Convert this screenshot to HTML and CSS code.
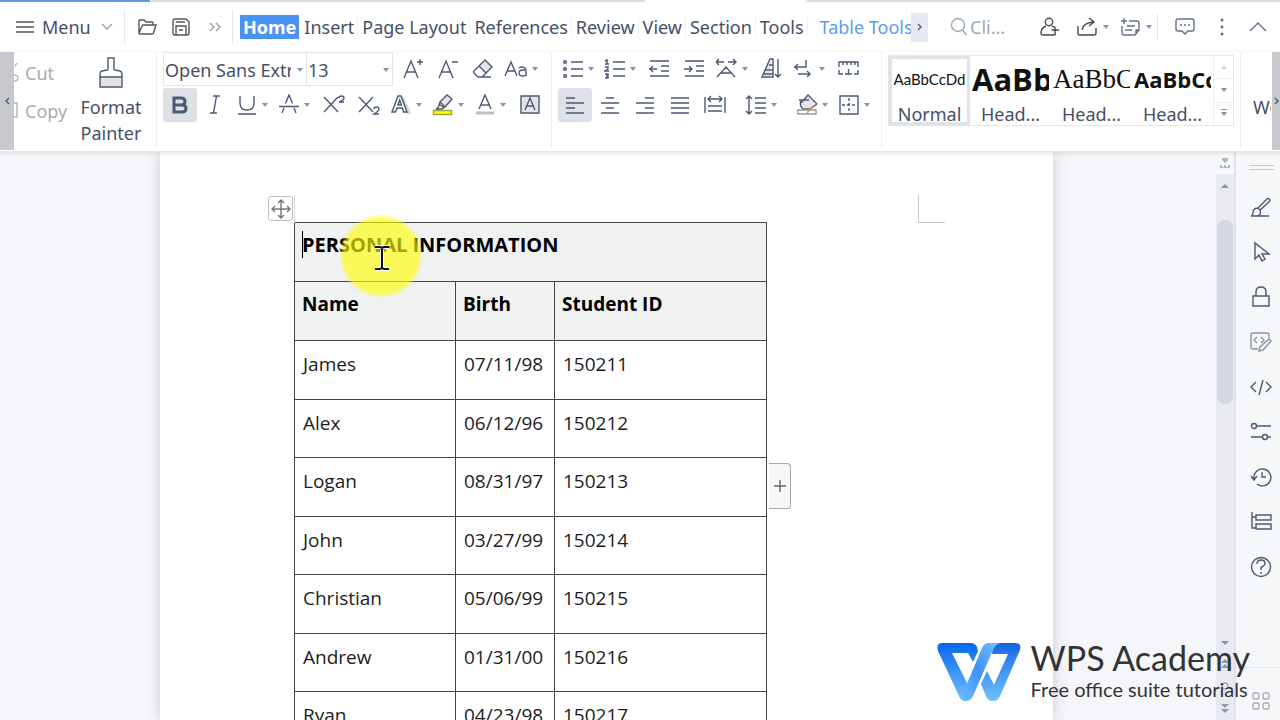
FILE: index.html
```html
<!DOCTYPE html>
<html lang="en">
<head>
<meta charset="utf-8">
<title>Personal Information - Writer</title>
<link rel="stylesheet" href="styles.css">
</head>
<body>
<div class="doc-tabs"><span class="doc-tab current"></span><span class="doc-tab wide"></span><span class="doc-tab open"></span><span class="doc-tab rest"></span></div>

<header class="menubar">
  <button class="menu-btn">
    <svg width="18" height="14" viewBox="0 0 18 14"><path d="M0 2h18M0 7h18M0 12h18"/></svg>
    <span>Menu</span>
    <svg class="pale" width="12" height="8" viewBox="0 0 12 8"><path d="M1 1l5 5 5-5"/></svg>
  </button>
  <div class="quick">
    <button aria-label="Open"><svg width="20" height="18" viewBox="0 0 20 18"><path d="M2 15V3q0-1 1-1h4l2 2h6q1 0 1 1v2M2 15l3-7q.4-1 1.200-1H19l-2.500 8q-.3 1-1.500 1H3q-1 0-1-1z"/></svg></button>
    <button aria-label="Save"><svg width="20" height="18" viewBox="0 0 20 18"><path d="M2 3q0-2 2-2h11l3 3v11q0 2-2 2H4q-2 0-2-2zM5 17V8h10v9M5 4h9M8 12h4"/></svg></button>
    <button aria-label="More quick actions"><svg class="pale" width="12" height="10" viewBox="0 0 12 10"><path d="M1 1l4 4-4 4M7 1l4 4-4 4"/></svg></button>
  </div>
  <nav class="tabs">
    <a class="tab active" href="#home">Home</a><a class="tab" href="#insert">Insert</a><a class="tab" href="#layout">Page Layout</a><a class="tab" href="#references">References</a><a class="tab" href="#review">Review</a><a class="tab" href="#view">View</a><a class="tab" href="#section">Section</a><a class="tab" href="#tools">Tools</a><a class="tab context" href="#table">Table Tools</a>
  </nav>
  <button class="tab-next" aria-label="More tabs"><svg width="6" height="8" viewBox="0 0 6 8"><path d="M1 1l3 3-3 3"/></svg></button>
  <label class="search">
    <svg width="18" height="20" viewBox="0 0 18 20"><circle cx="8" cy="8" r="6.500"/><path d="M12.500 13l4 5"/></svg>
    <input type="text" placeholder="Cli..." aria-label="Search commands">
  </label>
  <div class="actions">
    <button class="collab dark" aria-label="Collaborate"><svg width="20" height="20" viewBox="0 0 20 20"><circle cx="10" cy="5" r="3.700"/><path d="M12 18H4q-2 0-2-2 0-5 5-7M13 9l2 1M16 9.500v7M12.500 13H20M12 18h3q1.500 0 1.500-1.500"/></svg></button>
    <button class="drop dark" aria-label="Share"><svg width="20" height="20" viewBox="0 0 20 20"><path d="M1 9v7q0 2 2 2h14q2 0 2-2v-5M5 13q1-7 11-8M12 1l5 4-5 4"/></svg><i class="caret"></i></button>
    <button class="drop" aria-label="Add note"><svg width="20" height="20" viewBox="0 0 20 20"><path d="M1 4h6M4 1v6M9 4h8q2 0 2 2v7l-4 5H4q-2 0-2-2V9M7 9h8M5 13h7M19 13h-3v4"/></svg><i class="caret"></i></button>
    <button class="comment" aria-label="Comments"><svg width="20" height="18" viewBox="0 0 20 18"><path d="M3 1h14q2 0 2 2v8q0 2-2 2h-4l-3 3-3-3H3q-2 0-2-2V3q0-2 2-2zM5 7h2M9 7h2M13 7h2"/></svg></button>
    <button aria-label="More"><svg width="4" height="18" viewBox="0 0 4 18"><g class="solid"><circle cx="2" cy="2" r="1.500"/><circle cx="2" cy="9" r="1.500"/><circle cx="2" cy="16" r="1.500"/></g></svg></button>
    <button aria-label="Collapse ribbon"><svg width="18" height="10" viewBox="0 0 18 10"><path d="M1 9l8-8 8 8"/></svg></button>
  </div>
</header>

<section class="ribbon" aria-label="Home ribbon">
  <button class="scroller" aria-label="Scroll ribbon left"><svg width="5" height="8" viewBox="0 0 5 8"><path d="M4 1L1 4l3 3"/></svg></button>
  <div class="group clipboard">
    <div class="clip-list">
      <button disabled><svg width="8" height="20" viewBox="0 0 8 20"><path d="M1 3l2-3M0 12q4 0 4 3t-4 3"/></svg>Cut</button>
      <button disabled><svg width="8" height="20" viewBox="0 0 8 20"><path d="M0 2h3v14H0"/></svg>Copy</button>
    </div>
    <button class="painter"><svg width="24" height="32" viewBox="0 0 24 32"><path fill="#e2e3e5" stroke="none" d="M1 20h22v10H1z"/><path d="M9 1h6v11q0 1 1 1l5 1q2 .5 2 3v13H1V17q0-2.500 2-3l5-1q1 0 1-1zM1 20h22"/></svg><span>Format<br>Painter</span></button>
  </div>

  <div class="group font">
    <div class="row">
      <div class="combo family"><select aria-label="Font"><option>Open Sans ExtraBold</option></select><i class="caret"></i></div>
      <div class="combo size"><select aria-label="Font size"><option>13</option></select><i class="caret"></i></div>
      <button class="tool" aria-label="Grow font"><svg width="22" height="22" viewBox="0 0 22 22"><path d="M2 20L9 3l7 17M4.500 14h9M15 4h6M18 1v6"/></svg></button>
      <button class="tool" aria-label="Shrink font"><svg width="22" height="22" viewBox="0 0 22 22"><path d="M2 20L9 3l7 17M4.500 14h9M15 4h6"/></svg></button>
      <button class="tool" aria-label="Clear format"><svg width="22" height="22" viewBox="0 0 22 22"><path class="tint" d="M7 8l6-6 7 7-6 6z"/><path d="M2 13L13 2l7 7-10 10H6l-4-4q-1-1 0-2zM7 8l7 7M6 19h13"/></svg></button>
      <button class="tool drop" aria-label="Change case"><svg width="24" height="22" viewBox="0 0 24 22"><path d="M1 18L7 4l6 14M3 13h8M15 10q3-2 6 0 1 1 1 3v5M22 12h-3q-4 0-4 3t4 3 3-3"/></svg><i class="caret"></i></button>
    </div>
    <div class="row">
      <button class="tool on" aria-label="Bold"><svg width="22" height="22" viewBox="0 0 22 22"><path class="heavy" d="M5 4h7q4 0 4 3.500T12 11H5zM5 11h8q4 0 4 3.500T13 18H5z"/></svg></button>
      <button class="tool" aria-label="Italic"><svg width="22" height="22" viewBox="0 0 22 22"><path d="M9 2h7M6 19h7M12.500 2l-3 17"/></svg></button>
      <button class="tool drop" aria-label="Underline"><svg width="22" height="22" viewBox="0 0 22 22"><path d="M4 2v7q0 7 7 7t7-7V2M2 20h18"/></svg><i class="caret"></i></button>
      <button class="tool drop" aria-label="Strikethrough"><svg width="22" height="22" viewBox="0 0 22 22"><path d="M7.500 9.500L11 1l3.500 8.500M6 14l-2 5M16 14l2 5M1 12.500h20"/></svg><i class="caret"></i></button>
      <button class="tool" aria-label="Superscript"><svg width="22" height="22" viewBox="0 0 22 22"><path d="M1 3l14 15M15 3L1 18M16 4q0-2 2.500-2T21 4q0 2-5 4h5"/></svg></button>
      <button class="tool" aria-label="Subscript"><svg width="22" height="22" viewBox="0 0 22 22"><path d="M1 3l14 15M15 3L1 18M16 15q0-2 2.500-2t2.500 2q0 2-5 5h5"/></svg></button>
      <button class="tool drop" aria-label="Text effects"><svg width="22" height="22" viewBox="0 0 22 22"><path class="shade" d="M12 3l7 15-3 1"/><path d="M2 18L8 2h3l6 16h-3.500l-1-4H7l-1.500 4zM8 11h3.500L9.700 6z"/></svg><i class="caret"></i></button>
      <button class="tool drop" aria-label="Highlight"><svg width="22" height="22" viewBox="0 0 22 22"><path fill="#ffff00" stroke="#a3a344" d="M1.500 16.500h18v4h-18z"/><path class="tint" d="M8 9l8-8 4 4-8 8z"/><path d="M8 8l7-7 5 4-7 8zM8 8l-2 6-2 1h6l3-2M7 10l5 4"/></svg><i class="caret"></i></button>
      <button class="tool drop" aria-label="Font color"><svg width="22" height="22" viewBox="0 0 22 22"><path d="M5 15L11 1l6 14M7 11h8"/><path class="gray-bar" d="M2 19h18"/></svg><i class="caret"></i></button>
      <button class="tool" aria-label="Character border"><svg width="22" height="22" viewBox="0 0 22 22"><path class="tint" d="M2 2h18v17H2z"/><path d="M2 2h18v17H2zM6 16l5-12 5 12M8 12h6"/></svg></button>
    </div>
  </div>

  <div class="group paragraph">
    <div class="row">
      <button class="tool drop" aria-label="Bullets"><svg width="22" height="22" viewBox="0 0 22 22"><path d="M9 4h12M9 11h12M9 18h12"/><circle cx="3" cy="4" r="1.300"/><circle cx="3" cy="11" r="1.300"/><circle cx="3" cy="18" r="1.300"/></svg><i class="caret"></i></button>
      <button class="tool drop" aria-label="Numbering"><svg width="22" height="22" viewBox="0 0 22 22"><path d="M9 4h12M9 11h12M9 18h12M1 3l2-1v4M1 6h4M1 9h3v2l-3 2h4M1 16h3v4H1M2 18h2"/></svg><i class="caret"></i></button>
      <button class="tool" aria-label="Decrease indent"><svg width="22" height="22" viewBox="0 0 22 22"><path d="M1 3h19M12 8h8M12 13h8M1 18h19M8 11H0M4 8l-3 3 3 3"/></svg></button>
      <button class="tool" aria-label="Increase indent"><svg width="22" height="22" viewBox="0 0 22 22"><path d="M1 3h19M12 8h8M12 13h8M1 18h19M0 11h8M5 8l3 3-3 3"/></svg></button>
      <button class="tool drop" aria-label="Asian layout"><svg width="22" height="22" viewBox="0 0 22 22"><path d="M1 19l9-10 9 10M5 15h10M8 4H0M3 1L0 4l3 3M12 4h8M17 1l3 3-3 3"/></svg><i class="caret"></i></button>
      <button class="tool" aria-label="Sort"><svg width="22" height="22" viewBox="0 0 22 22"><path class="tint" d="M1 18L10 2v16z"/><path d="M1 19L9 1h3v18zM5 12h7M3 16h9M8 7h4M17 1v18M14 16l3 3 3-3"/></svg></button>
      <button class="tool drop" aria-label="Paragraph marks"><svg width="22" height="22" viewBox="0 0 22 22"><path d="M13 2v7H1M5 6L2 9l3 3M5 16h12M14 13l3 3-3 3"/></svg><i class="caret"></i></button>
      <button class="tool" aria-label="Tabs"><svg width="22" height="22" viewBox="0 0 22 22"><path d="M1 9V4h19v5M5 4v3M9 4v3M13 4v3M17 4v3M1 12v4h4M20 12v4h-4M7 16h7M10.500 11v5"/></svg></button>
    </div>
    <div class="row">
      <button class="tool on" aria-label="Align left"><svg width="22" height="22" viewBox="0 0 22 22"><path d="M2 4h9M2 9h18M2 14h9M2 19h18"/></svg></button>
      <button class="tool" aria-label="Center"><svg width="22" height="22" viewBox="0 0 22 22"><path d="M7 4h8M2 9h18M7 14h8M2 19h18"/></svg></button>
      <button class="tool" aria-label="Align right"><svg width="22" height="22" viewBox="0 0 22 22"><path d="M11 4h9M2 9h18M11 14h9M2 19h18"/></svg></button>
      <button class="tool" aria-label="Justify"><svg width="22" height="22" viewBox="0 0 22 22"><path d="M2 4h18M2 9h18M2 14h18M2 19h18"/></svg></button>
      <button class="tool" aria-label="Distribute"><svg width="22" height="22" viewBox="0 0 22 22"><path d="M1 3v16M21 3v16M4 5h14M7 2L4 5l3 3M15 2l3 3-3 3M4 12h14M4 17h14"/></svg></button>
      <button class="tool drop apart" aria-label="Line spacing"><svg width="22" height="22" viewBox="0 0 22 22"><path d="M10 4h11M10 9h11M10 14h11M10 19h11M4 2v18M1 5l3-3 3 3M1 17l3 3 3-3"/></svg><i class="caret"></i></button>
      <button class="tool drop apart" aria-label="Shading"><svg width="22" height="22" viewBox="0 0 22 22"><path class="tint" d="M4 9l8-7 8 8-8 6z"/><path d="M3 6h10M5 9l7-8 9 9M5 7q-2 4 2 8h7l7-5"/><path stroke="#999999" d="M2 16h18v4H2z"/><path stroke="#dd9850" d="M17 12l-6 7"/></svg><i class="caret"></i></button>
      <button class="tool drop" aria-label="Borders"><svg width="22" height="22" viewBox="0 0 22 22"><path d="M2 2h18v18H2z"/><path stroke-dasharray="3 2" d="M11 4v14M4 11h14"/></svg><i class="caret"></i></button>
    </div>
  </div>

  <div class="group styles">
    <div class="gallery">
      <button class="style chosen"><span class="sample normal">AaBbCcDd</span><span>Normal</span></button>
      <button class="style"><span class="sample h1">AaBb</span><span>Head...</span></button>
      <button class="style"><span class="sample h2">AaBbC</span><span>Head...</span></button>
      <button class="style"><span class="sample h3">AaBbCc</span><span>Head...</span></button>
      <div class="gallery-nav">
        <button aria-label="Previous styles"><i class="caret up faint"></i></button>
        <button aria-label="Next styles"><i class="caret"></i></button>
        <button aria-label="All styles"><i class="caret barred"></i></button>
      </div>
    </div>
  </div>
  <div class="group tail"><button>Word</button></div>
  <button class="scroller right" aria-label="Scroll ribbon right"><svg width="5" height="8" viewBox="0 0 5 8"><path d="M1 1l3 3-3 3"/></svg></button>
</section>

<main class="workspace">
  <div class="canvas">
    <article class="page">
      <div class="table-wrap">
        <button class="move" aria-label="Move table"><svg width="20" height="20" viewBox="0 0 20 20"><path d="M10 1v18M1 10h18M7 4l3-3 3 3M7 16l3 3 3-3M4 7l-3 3 3 3M16 7l3 3-3 3"/></svg></button>
        <table>
          <colgroup><col class="c-name"><col class="c-birth"><col></colgroup>
          <thead>
            <tr><th class="title" colspan="3">PERSONAL INFORMATION</th></tr>
            <tr><th>Name</th><th>Birth</th><th>Student ID</th></tr>
          </thead>
          <tbody>
            <tr><td>James</td><td>07/11/98</td><td>150211</td></tr>
            <tr><td>Alex</td><td>06/12/96</td><td>150212</td></tr>
            <tr><td>Logan</td><td>08/31/97</td><td>150213</td></tr>
            <tr><td>John</td><td>03/27/99</td><td>150214</td></tr>
            <tr><td>Christian</td><td>05/06/99</td><td>150215</td></tr>
            <tr><td>Andrew</td><td>01/31/00</td><td>150216</td></tr>
            <tr><td>Ryan</td><td>04/23/98</td><td>150217</td></tr>
          </tbody>
        </table>
        <span class="text-caret"></span>
        <span class="spot"></span>
        <svg class="ibeam" width="18" height="28" viewBox="0 0 18 28"><path class="halo" d="M2 3h5l2 1 2-1h5M2 25h5l2-1 2 1h5M9 4v20"/><path class="core" d="M2 3h5l2 1 2-1h5M2 25h5l2-1 2 1h5M9 4v20"/></svg>
        <button class="add-col" aria-label="Add column"><svg width="12" height="12" viewBox="0 0 12 12"><path d="M6 0v12M0 6h12"/></svg></button>
      </div>
      <span class="crop left"></span>
      <span class="crop right"></span>
    </article>
  </div>
  <div class="scrollbar">
    <div class="split"><svg width="12" height="12" viewBox="0 0 12 12"><path d="M3 1h6v2L6 6 3 3zM1 8h2v3H1zM5 8h2v3H5zM9 8h2v3H9zM1 10h10v1H1z"/></svg></div>
    <div class="track">
      <i class="caret up"></i>
      <div class="thumb"></div>
      <div class="jump">
        <i class="caret"></i>
        <svg width="10" height="10" viewBox="0 0 10 10"><path d="M1 5l4-4 4 4zM1 10l4-4 4 4z"/></svg>
        <svg width="10" height="10" viewBox="0 0 10 10"><circle class="ring" cx="5" cy="5" r="3"/></svg>
        <svg width="10" height="10" viewBox="0 0 10 10"><path d="M1 0l4 4 4-4zM1 5l4 4 4-4z"/></svg>
      </div>
    </div>
  </div>
  <aside class="sidepane">
    <span class="grip"></span>
    <div class="side-tools">
      <button aria-label="Format"><svg width="22" height="22" viewBox="0 0 22 22"><path d="M8 12L17 3q1-1 2.500 0 1 1.500 0 2.500L10 14zM8 12q-5 0-5 5l-1 3h5q5-1 3-6M1 20h18"/></svg></button>
      <button aria-label="Select"><svg width="22" height="22" viewBox="0 0 22 22"><path d="M5 2v16l4-4 3 6 3-2-3-5h7z"/></svg></button>
      <button aria-label="Protect"><svg width="22" height="22" viewBox="0 0 22 22"><path d="M3 10h16v10H3zM6 10V6q0-5 5-5t5 5v4"/></svg></button>
      <button class="soft" aria-label="Code editing"><svg width="22" height="22" viewBox="0 0 22 22"><path d="M8 18H3q-2 0-2-2V4q0-2 2-2h14q2 0 2 2v3M7 6L4 9l3 3M11 6l3 3-3 3M9 20l1-4 9-8 2 2-8 9z"/></svg></button>
      <button aria-label="Code"><svg width="22" height="22" viewBox="0 0 22 22"><path d="M6 6l-5 5 5 5M16 6l5 5-5 5M13 4L9 19"/></svg></button>
      <button aria-label="Settings"><svg width="22" height="22" viewBox="0 0 22 22"><circle cx="4" cy="5" r="2.500"/><path d="M7 5h14M1 16h11M18 16h3"/><circle cx="15" cy="16" r="2.500"/></svg></button>
      <button aria-label="History"><svg width="22" height="22" viewBox="0 0 22 22"><path d="M4 13a8.500 8.500 0 1 1 3 5M1 10l3 4 3-4M12 6v5h4"/></svg></button>
      <button aria-label="Outline"><svg width="22" height="22" viewBox="0 0 22 22"><path d="M2 1v16h4M2 6h4M6 4h15v5H6zM6 13h15v5H6z"/></svg></button>
      <button aria-label="Help"><svg width="22" height="22" viewBox="0 0 22 22"><circle cx="11" cy="11" r="9.500"/><path d="M7 8q0-4 4-4t4 3.500q0 2-4 4V14M11 16v2"/></svg></button>
    </div>
    <button class="apps" aria-label="Apps"><svg width="20" height="20" viewBox="0 0 20 20"><rect x="2" y="2" width="6" height="6" rx="1.500"/><rect x="12" y="2" width="6" height="6" rx="1.500"/><rect x="2" y="12" width="6" height="6" rx="1.500"/><rect x="12" y="12" width="6" height="6" rx="1.500"/></svg></button>
  </aside>
</main>

<div class="brand">
  <svg width="84" height="58" viewBox="0 0 84 58">
    <defs>
      <linearGradient id="g1" x1="0" y1="0" x2="0" y2="1"><stop offset="0" stop-color="#0668ee"/><stop offset="1" stop-color="#70bfff"/></linearGradient>
      <linearGradient id="g2" x1="1" y1="0" x2="0" y2="1"><stop offset="0" stop-color="#75c3ff"/><stop offset=".5" stop-color="#3e92f8"/><stop offset="1" stop-color="#70bfff"/></linearGradient>
      <linearGradient id="g3" x1="0" y1="0" x2="0" y2="1"><stop offset="0" stop-color="#1263dd"/><stop offset=".3" stop-color="#3384f4"/><stop offset="1" stop-color="#70c0ff"/></linearGradient>
    </defs>
    <path fill="url(#g1)" d="M5 0h29q4 0 6 4l1 4-5 11-5-9H15l15 30-2 17q-4 0-6-4L1 8Q-1 0 5 0z"/>
    <path fill="url(#g3)" d="M56 0h22q7 0 5 7L63 53q-2 5-7 5t-7-5l-5-12 6-13 7 14 14-31H55z"/>
    <path fill="url(#g2)" d="M52 0h11q-5 2-7 7L36 53q-2 5-8 5-4 0-6-5l7-10L45 5q2-5 7-5z"/>
  </svg>
  <div class="brand-text"><strong>WPS Academy</strong><span>Free office suite tutorials</span></div>
</div>
</body>
</html>
```
FILE: styles.css
```css
* { box-sizing: border-box; }
html, body { height: 100%; }
body {
  margin: 0; display: flex; flex-direction: column; overflow: hidden; position: relative;
  background: #ffffff; color: #455066; font-family: "Noto Sans", "Open Sans", sans-serif; font-size: 18px;
}
button { margin: 0; padding: 0; border: 0; background: none; color: inherit; font: inherit; display: flex; align-items: center; justify-content: center; flex: none; }
svg { display: block; flex: none; fill: none; stroke: #4c5975; stroke-width: 1.4; }
a { color: inherit; text-decoration: none; }
.caret { display: block; flex: none; width: 0; height: 0; border: 3px solid transparent; border-top: 4px solid #8695ac; border-bottom: 0; }
.caret.up { border-top: 0; border-bottom: 4px solid #8695ac; }
.caret.faint { opacity: .4; }
.scrollbar .caret { border-left-width: 4px; border-right-width: 4px; }

.doc-tabs { display: flex; height: 2px; flex: none; }
.doc-tab { background: #dcdde2; }
.doc-tab.current { width: 151px; background: #6794ee; border-right: 1px solid #ffffff; }
.doc-tab.wide { width: 494px; }
.doc-tab.open { width: 161px; background: #ffffff; }
.doc-tab.rest { flex: 1; }

/* Menu bar */
.menubar { display: flex; align-items: center; height: 50px; flex: none; }
.menu-btn { gap: 8px; padding-left: 16px; width: 125px; height: 34px; justify-content: flex-start; border-right: 1px solid #e4e6ea; }
.menu-btn span { margin-right: 2px; }
.menu-btn svg, .quick svg { stroke: #555555; }
.menubar svg.pale { stroke: #999fa8; }
.quick { display: flex; width: 108px; height: 34px; padding-left: 5px; border-right: 1px solid #e4e6ea; }
.quick button { width: 34px; }
.tabs { display: flex; flex: 1; min-width: 0; align-items: center; overflow: hidden; white-space: nowrap; padding-left: 7px; line-height: 24px; }
.tab { padding: 0 3px 0 4px; border-right: 1px solid #f2f3f5; }
.tab.active { background: #4b93f2; color: #ffffff; font-weight: 700; padding: 0 3px; border: 0; margin-right: 1px; }
.tab.context { color: #5b9bf3; padding-left: 12px; border: 0; }
.tab-next { width: 17px; height: 29px; background: #e6e9ef; }
.search { display: flex; align-items: center; gap: 2px; width: 88px; flex: none; padding-left: 22px; }
.search svg { stroke: #9eaaba; }
.search input { width: 44px; border: 0; padding: 0; outline: 0; background: none; font: inherit; color: inherit; }
.search input::placeholder { color: #9ba8bb; opacity: 1; }
.actions { display: flex; align-items: center; height: 26px; padding: 0 4px 0 11px; }
.actions button { width: 36px; height: 26px; }
.actions button.collab { width: 44px; }
.actions button.drop { width: 43px; gap: 6px; }
.actions svg { stroke: #667189; }
.actions .dark svg { stroke: #4a4a4e; }
.actions .solid { fill: #667189; stroke: none; }
.actions button.comment { width: 47px; padding-left: 8px; border-left: 1px solid #e4e6ea; }

/* Ribbon */
.ribbon { display: flex; height: 100px; flex: none; border-bottom: 1px solid #e8e8ea; box-shadow: 0 1px 4px rgba(0,0,0,.12); position: relative; z-index: 1; background: #ffffff; }
.scroller { width: 14px; height: 98px; background: #c8c9ce; }
.scroller.right { width: 8px; }
.group { height: 97px; border-right: 1px solid #f0f0f2; flex: none; }
.clipboard { display: flex; width: 143px; }
.clip-list { width: 57px; display: flex; flex-direction: column; gap: 10px; padding-top: 7px; }
.clip-list button { gap: 3px; height: 28px; justify-content: flex-start; color: #a9abb0; }
.clip-list svg { stroke: #b4b6ba; }
.painter { width: 80px; flex-direction: column; justify-content: flex-start; padding-top: 5px; line-height: 26px; gap: 5px; }
.font, .paragraph { padding-left: 6px; display: flex; flex-direction: column; gap: 2px; }
.font { width: 395px; }
.paragraph { width: 330px; }
.row { display: flex; height: 34px; }
.combo { position: relative; border: 1px solid #e3e5e8; }
.combo.family { width: 144px; }
.combo.size { width: 86px; border-left: 0; margin-right: 2px; }
.combo select { appearance: none; width: 100%; height: 100%; border: 0; outline: 0; padding: 2px 15px 0 1px; background: none; color: inherit; font: inherit; }
.combo .caret { position: absolute; right: 3px; top: 15px; pointer-events: none; }
.tool { width: 35px; height: 34px; border-radius: 3px; }
.tool.on { background: #dde1e6; width: 34px; }
.tool.drop { width: 42px; justify-content: flex-start; padding-left: 4px; gap: 4px; }
.tool.apart { margin-left: 9px; }
.heavy { stroke-width: 3; }
.tint { fill: #e4e5e8; stroke: none; }
.shade { stroke: #d4d4d8; stroke-width: 3; }
.gray-bar { stroke: #c0c0c0; stroke-width: 3; }
.styles { width: 359px; padding: 3px 0 0 6px; }
.gallery { display: flex; width: 346px; height: 71px; border: 1px solid #e3e5e8; }
.style { width: 81px; flex-direction: column; justify-content: flex-start; overflow: hidden; padding: 0 2px; line-height: 24px; }
.style.chosen { border: 3px solid #e1e2e5; padding: 0; }
.sample { display: block; width: 100%; height: 46px; flex: none; line-height: 46px; color: #111111; overflow: hidden; text-align: left; white-space: nowrap; }
.chosen .sample { height: 43px; line-height: 41px; text-align: center; }
.sample.normal { font-family: Lato, sans-serif; font-size: 15px; }
.sample.h1 { font-family: "Open Sans", sans-serif; font-size: 31px; font-weight: 700; }
.sample.h2 { font-family: "Liberation Serif", serif; font-size: 27px; }
.sample.h3 { font-family: "Open Sans", sans-serif; font-size: 22px; font-weight: 700; }
.gallery-nav { display: flex; flex-direction: column; flex: 1; border-left: 1px solid #eceef0; }
.gallery-nav button { flex: 1; border-bottom: 1px solid #eceef0; }
.gallery-nav button:last-child { border: 0; }
.barred { position: relative; }
.barred::before { content: ""; position: absolute; left: -3px; top: -7px; width: 6px; height: 1px; background: #8695ac; }
.tail { flex: 1; min-width: 0; overflow: hidden; border: 0; padding: 41px 1px 0 12px; }
.tail button { width: 100%; height: 28px; overflow: hidden; justify-content: flex-start; }

/* Document area */
.workspace { display: flex; flex: 1; min-height: 0; }
.canvas { flex: 1; min-width: 0; display: flex; justify-content: center; overflow: hidden; background: #f5f6f9; padding-right: 3px; }
.page { position: relative; width: 893px; background: #ffffff; padding: 70px 134px 0; box-shadow: 0 0 14px rgba(60,65,80,.22); }
.table-wrap { position: relative; width: 473px; }
table { width: 100%; table-layout: fixed; border-collapse: collapse; font-family: "Open Sans", sans-serif; font-size: 19px; line-height: 26px; color: #1c1c1c; }
.c-name { width: 161px; }
.c-birth { width: 99px; }
th, td { height: 59px; padding: 10px 0 0 8px; border: 1px solid #444444; text-align: left; vertical-align: top; white-space: nowrap; }
tbody tr:nth-child(even) td { height: 58px; }
th { background: #f0f2f1; color: #000000; font-weight: 700; padding: 9px 0 0 7px; }
th.title { font-size: 20px; }
.move { position: absolute; left: -26px; top: -26px; width: 25px; height: 25px; border: 1px solid #bfbfbf; border-radius: 3px; background: #ffffff; }
.move svg { stroke: #777777; }
.text-caret { position: absolute; left: 8px; top: 9px; width: 1px; height: 27px; background: #000000; }
.spot { position: absolute; left: 45px; top: -8px; width: 84px; height: 84px; border-radius: 50%; background: radial-gradient(closest-side, rgba(255,255,0,.63) 88%, rgba(255,240,60,.25) 97%, rgba(255,240,60,0)); }
.ibeam { position: absolute; left: 79px; top: 22px; }
.halo { stroke: #ffffff; stroke-width: 4; }
.core { stroke: #111111; stroke-width: 2; }
.add-col { position: absolute; left: 475px; top: 241px; width: 22px; height: 46px; background: #f7f7f7; border: 1px solid #a8a8a8; border-left: 0; border-radius: 0 4px 4px 0; }
.add-col svg { stroke: #666666; }
.crop { position: absolute; top: 43px; width: 27px; height: 28px; }
.crop.left { left: 108px; border-right: 1px solid #d8d8d8; }
.crop.right { right: 108px; border-left: 1px solid #c8c8c8; border-bottom: 1px solid #c8c8c8; }

.scrollbar { display: flex; flex-direction: column; width: 20px; flex: none; background: #f5f7f9; border-right: 2px solid #dfe2e8; }
.scrollbar svg { fill: #8b9ab1; stroke: none; }
.scrollbar .ring { fill: none; stroke: #a3b0c4; stroke-width: 1.5; }
.split { height: 22px; display: flex; align-items: center; justify-content: center; }
.split svg { opacity: .7; }
.track { flex: 1; display: flex; flex-direction: column; align-items: center; padding-top: 10px; background: #e8eaef; }
.thumb { width: 16px; height: 184px; margin-top: 32px; border-radius: 8px; background: #d4d8df; }
.jump { margin-top: auto; padding-bottom: 6px; display: flex; flex-direction: column; align-items: center; gap: 13px; }

.sidepane { display: flex; flex-direction: column; align-items: center; width: 44px; flex: none; background: #f5f7f9; padding-left: 6px; }
.grip { width: 25px; height: 5px; margin-top: 13px; border: 1px solid #c6c9ce; border-width: 1px 0; }
.side-tools { display: flex; flex-direction: column; margin-top: 14px; }
.side-tools button { width: 38px; height: 45px; }
.side-tools .soft svg { stroke: #8a93a5; }
.apps { width: 44px; height: 53px; margin: auto 0 0 -6px; padding: 14px 0 0 6px; border-top: 1px solid #e2e5e9; }
.apps svg { stroke: #aaaeb4; }

.brand { position: absolute; right: 30px; bottom: 17px; display: flex; align-items: flex-start; gap: 10px; height: 60px; pointer-events: none; color: #333333; }
.brand svg { stroke: none; }
.brand-text { display: flex; flex-direction: column; white-space: nowrap; font-family: Lato, sans-serif; }
.brand-text strong { font-weight: 400; font-size: 34px; line-height: 30px; }
.brand-text span { font-size: 20px; line-height: 32px; }
```
